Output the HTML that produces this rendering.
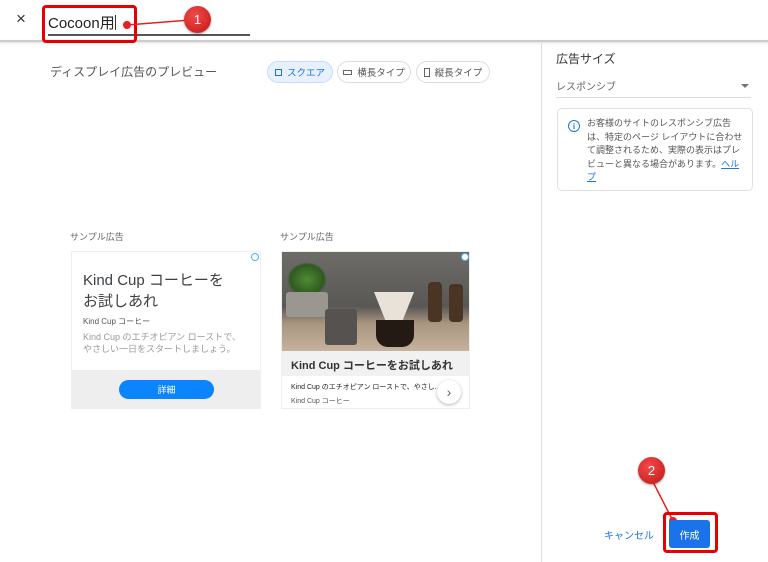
<!DOCTYPE html>
<html><head><meta charset="utf-8"><style>
*{margin:0;padding:0;box-sizing:border-box}
body{width:768px;height:562px;background:#fff;position:relative;overflow:hidden;font-family:"Liberation Sans","Noto Sans CJK JP",sans-serif;color:#333}
.a{position:absolute;white-space:nowrap}
.chip{position:absolute;top:61px;height:22px;border:1px solid #dadce0;border-radius:11px;font-size:9.5px;color:#555;display:flex;align-items:center;justify-content:center;gap:5px}
.circ{position:absolute;width:27px;height:27px;border-radius:50%;background:radial-gradient(circle at 40% 35%,#f04a4a,#c41515);color:#fff;font-size:13px;display:flex;align-items:center;justify-content:center;box-shadow:0 1px 2px rgba(0,0,0,.4)}
</style></head><body>
<div class="a" style="left:16px;top:9px;font-size:17px;color:#333">×</div>
<div class="a" style="left:48px;top:12px;font-size:15px;color:#222">Cocoon用<span style="display:inline-block;width:1px;height:15px;background:#333;vertical-align:-2px"></span></div>
<div class="a" style="left:48px;top:34px;width:202px;height:2px;background:#555"></div>
<div class="a" style="left:0;top:40px;width:768px;height:2px;background:#ccc;box-shadow:0 1px 2px rgba(0,0,0,.15)"></div>
<div class="a" style="left:541px;top:42px;width:1px;height:520px;background:#e0e0e0"></div>
<div class="a" style="left:42px;top:5px;width:95px;height:38px;border:3px solid #e60000;border-radius:4px"></div>
<svg class="a" style="left:0;top:0" width="768" height="562"><line x1="127" y1="25" x2="190" y2="20" stroke="#e62020" stroke-width="1.5"/><circle cx="127" cy="25" r="4" fill="#e62020"/><line x1="673" y1="521" x2="651" y2="478" stroke="#e62020" stroke-width="1.5"/><circle cx="673" cy="521" r="4" fill="#e62020"/></svg>
<div class="circ" style="left:184px;top:6px">1</div>
<div class="a" style="left:50px;top:63px;font-size:12px;color:#555">ディスプレイ広告のプレビュー</div>
<div class="chip" style="left:267px;width:66px;background:#e8f0fe;border-color:#c6dafc;color:#1a73e8"><span style="width:7px;height:7px;border:1.5px solid #1a73e8"></span>スクエア</div>
<div class="chip" style="left:337px;width:74px"><span style="width:9px;height:5px;border:1px solid #666"></span>横長タイプ</div>
<div class="chip" style="left:416px;width:74px"><span style="width:6px;height:9px;border:1px solid #666"></span>縦長タイプ</div>
<div class="a" style="left:70px;top:230px;font-size:9px;color:#666">サンプル広告</div>
<div class="a" style="left:71px;top:251px;width:190px;height:158px;border:1px solid #eee;background:#fff">
 <div class="a" style="left:11px;top:18px;font-size:15px;line-height:21px;color:#3c4043">Kind Cup コーヒーを<br>お試しあれ</div>
 <div class="a" style="left:11px;top:64px;font-size:8px;color:#555">Kind Cup コーヒー</div>
 <div class="a" style="left:11px;top:79px;font-size:9px;line-height:12px;color:#999">Kind Cup のエチオピアン ローストで、<br>やさしい一日をスタートしましょう。</div>
 <div class="a" style="left:0;top:118px;width:188px;height:39px;background:#eee"></div>
 <div class="a" style="left:47px;top:128px;width:95px;height:19px;border-radius:10px;background:#0a84ff;color:#fff;font-size:9px;display:flex;align-items:center;justify-content:center">詳細</div>
 <div class="a" style="left:179px;top:1px;width:8px;height:8px;border-radius:50%;border:1.5px solid #4ab3e8"></div>
</div>
<div class="a" style="left:280px;top:230px;font-size:9px;color:#666">サンプル広告</div>
<div class="a" style="left:281px;top:251px;width:189px;height:158px;border:1px solid #eee;background:#fff;overflow:hidden">
 <div class="a" style="left:0;top:0;width:189px;height:99px;background:linear-gradient(180deg,#6e6c69 0%,#5a5855 55%,#a89580 72%,#c7b39c 100%)"></div>
 <div class="a" style="left:5px;top:10px;width:40px;height:35px;background:radial-gradient(#4f8a35,#2f5a20 60%,transparent 70%)"></div>
 <div class="a" style="left:4px;top:40px;width:42px;height:25px;background:#9a9690;border-radius:3px"></div>
 <div class="a" style="left:43px;top:57px;width:32px;height:36px;background:#55524f;border-radius:3px"></div>
 <div class="a" style="left:92px;top:40px;width:40px;height:30px;background:#e8e2d8;clip-path:polygon(0 0,100% 0,70% 100%,30% 100%)"></div>
 <div class="a" style="left:94px;top:68px;width:38px;height:27px;background:#241a14;border-radius:0 0 12px 12px"></div>
 <div class="a" style="left:146px;top:30px;width:14px;height:40px;background:#4a3525;border-radius:4px"></div>
 <div class="a" style="left:167px;top:32px;width:14px;height:38px;background:#4a3525;border-radius:4px"></div>
 <div class="a" style="left:0;top:99px;width:189px;height:25px;background:#f1f1f1"></div>
 <div class="a" style="left:9px;top:105px;font-size:11px;font-weight:bold;color:#333">Kind Cup コーヒーをお試しあれ</div>
 <div class="a" style="left:9px;top:130px;font-size:7px;color:#222">Kind Cup のエチオピアン ローストで、やさし...</div>
 <div class="a" style="left:9px;top:144px;font-size:7px;color:#555">Kind Cup コーヒー</div>
 <div class="a" style="left:155px;top:128px;width:24px;height:24px;border-radius:50%;background:#fff;box-shadow:0 1px 3px rgba(0,0,0,.3);font-size:14px;color:#666;display:flex;align-items:center;justify-content:center">›</div>
 <div class="a" style="left:179px;top:1px;width:8px;height:8px;border-radius:50%;border:1.5px solid #4ab3e8;background:#fff"></div>
</div>
<div class="a" style="left:556px;top:50px;font-size:12px;color:#333">広告サイズ</div>
<div class="a" style="left:556px;top:78px;font-size:10px;color:#666">レスポンシブ</div>
<div class="a" style="left:741px;top:84px;width:0;height:0;border-left:4px solid transparent;border-right:4px solid transparent;border-top:4px solid #777"></div>
<div class="a" style="left:556px;top:97px;width:195px;height:1px;background:#ddd"></div>
<div class="a" style="left:557px;top:108px;width:196px;height:83px;border:1px solid #e0e0e0;border-radius:5px"></div>
<div class="a" style="left:568px;top:120px;width:12px;height:12px;border-radius:50%;border:1.5px solid #1a73e8;color:#1a73e8;font-size:8px;font-weight:bold;display:flex;align-items:center;justify-content:center">i</div>
<div class="a" style="left:587px;top:117px;font-size:9px;line-height:13.5px;color:#555">お客様のサイトのレスポンシブ広告<br>は、特定のページ レイアウトに合わせ<br>て調整されるため、実際の表示はプレ<br>ビューと異なる場合があります。<span style="color:#1a73e8;text-decoration:underline">ヘル</span><br><span style="color:#1a73e8;text-decoration:underline">プ</span></div>
<div class="a" style="left:604px;top:527px;font-size:10px;color:#1a73e8">キャンセル</div>
<div class="a" style="left:669px;top:520px;width:41px;height:28px;background:#1a73e8;border-radius:3px;color:#fff;font-size:10px;display:flex;align-items:center;justify-content:center">作成</div>
<div class="a" style="left:663px;top:512px;width:55px;height:41px;border:3px solid #e60000;border-radius:4px"></div>
<div class="circ" style="left:638px;top:457px">2</div>
</body></html>
